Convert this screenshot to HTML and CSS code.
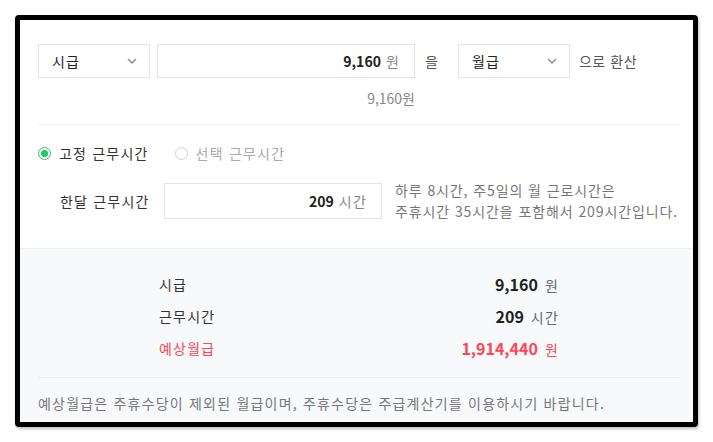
FILE: index.html
```html
<!DOCTYPE html>
<html lang="ko">
<head>
<meta charset="utf-8">
<title>월급 환산</title>
<link rel="stylesheet" href="styles.css">
</head>
<body>
<div class="frame">
  <section class="top">
    <div class="convert-row">
      <div class="select select-from">
        <span>시급</span>
        <svg class="chev" width="10" height="6" viewBox="0 0 10 6"><path d="M1 1 L5 5 L9 1" fill="none" stroke="#888" stroke-width="1.4"/></svg>
      </div>
      <div class="amount">
        <b>9,160</b><span class="unit">원</span>
      </div>
      <span class="particle">을</span>
      <div class="select select-to">
        <span>월급</span>
        <svg class="chev" width="10" height="6" viewBox="0 0 10 6"><path d="M1 1 L5 5 L9 1" fill="none" stroke="#888" stroke-width="1.4"/></svg>
      </div>
      <span class="suffix">으로 환산</span>
    </div>
    <div class="echo-row"><span class="echo">9,160원</span></div>
    <hr class="divider">
    <div class="radio-row">
      <label class="radio checked"><span class="dot"></span>고정 근무시간</label>
      <label class="radio"><span class="dot"></span>선택 근무시간</label>
    </div>
    <div class="hours-row">
      <span class="hours-label">한달 근무시간</span>
      <div class="hours-input"><b>209</b><span class="unit">시간</span></div>
      <p class="hours-help">하루 8시간, 주5일의 월 근로시간은<br>주휴시간 35시간을 포함해서 209시간입니다.</p>
    </div>
  </section>
  <section class="result">
    <ul class="summary">
      <li><span class="k">시급</span><span class="v"><b>9,160</b><span class="unit">원</span></span></li>
      <li><span class="k">근무시간</span><span class="v"><b>209</b><span class="unit">시간</span></span></li>
      <li class="total"><span class="k">예상월급</span><span class="v"><b>1,914,440</b><span class="unit">원</span></span></li>
    </ul>
    <hr class="divider">
    <p class="note">예상월급은 주휴수당이 제외된 월급이며, 주휴수당은 주급계산기를 이용하시기 바랍니다.</p>
  </section>
</div>
</body>
</html>
```

FILE: styles.css
```css
html, body {
  margin: 0;
  padding: 0;
  background: #fff;
}
body {
  font-family: "Noto Sans CJK KR", "Noto Sans", sans-serif;
  font-size: 14px;
  color: #222;
  letter-spacing: 1.2px;
}
b {
  letter-spacing: 0;
}
.frame {
  margin: 15px;
  height: 412px;
  box-sizing: border-box;
  border: 5px solid #000;
  border-radius: 4px;
  box-shadow: 1px 2px 3px rgba(0,0,0,0.25);
  display: flex;
  flex-direction: column;
  overflow: hidden;
  background: #fff;
}
.top {
  padding: 24px 13px 0 18px;
  height: 228px;
  box-sizing: border-box;
}
.convert-row {
  display: flex;
  align-items: center;
  height: 34px;
}
.select {
  box-sizing: border-box;
  width: 112px;
  height: 34px;
  border: 1px solid #e1e5ea;
  display: flex;
  align-items: center;
  justify-content: space-between;
  padding: 0 12px 0 13px;
  line-height: 20px;
}
.amount {
  box-sizing: border-box;
  width: 258px;
  height: 34px;
  margin-left: 7px;
  border: 1px solid #e1e5ea;
  display: flex;
  align-items: center;
  justify-content: flex-end;
  padding-right: 14px;
}
.amount b, .hours-input b {
  font-weight: 700;
  color: #222;
}
.unit {
  color: #888;
  margin-left: 5px;
}
.particle {
  margin: 0 20px 0 10px;
  color: #555;
  letter-spacing: 0;
}
.suffix {
  margin-left: 9px;
  color: #555;
  letter-spacing: 0.6px;
}
.echo-row {
  display: flex;
  width: 377px;
  justify-content: flex-end;
  margin-top: 10px;
  line-height: 20px;
}
.echo {
  color: #888;
  letter-spacing: 0;
}
.divider {
  border: 0;
  border-top: 1px solid #eceef1;
  margin: 16px 0 0 0;
  height: 0;
}
.radio-row {
  display: flex;
  align-items: center;
  margin-top: 18px;
  line-height: 20px;
  gap: 26px;
}
.radio {
  display: flex;
  align-items: center;
  color: #aaa;
}
.radio.checked {
  color: #333;
}
.dot {
  box-sizing: border-box;
  width: 13px;
  height: 13px;
  border-radius: 50%;
  border: 1px solid #d0d0d0;
  margin-right: 8px;
  background: #fff;
}
.radio.checked .dot {
  border: 1.5px solid #27c96a;
  background: radial-gradient(circle, #27c96a 0 3.4px, #fff 3.8px);
}
.hours-row {
  display: flex;
  align-items: center;
  margin-top: 17px;
}
.hours-label {
  width: 126px;
  padding-left: 22px;
  box-sizing: border-box;
  color: #333;
}
.hours-input {
  box-sizing: border-box;
  width: 218px;
  height: 36px;
  border: 1px solid #e1e5ea;
  display: flex;
  align-items: center;
  justify-content: flex-end;
  padding-right: 14px;
}
.hours-help {
  margin: 0 0 0 13px;
  color: #777;
  line-height: 21px;
  font-size: 14px;
  letter-spacing: 0.9px;
}
.result {
  flex: 1;
  background: #f8f9fb;
  border-top: 1px solid #eef0f2;
  padding: 19px 13px 0 18px;
}
.summary {
  list-style: none;
  margin: 0 auto;
  padding: 0;
  width: 400px;
}
.summary li {
  display: flex;
  justify-content: space-between;
  align-items: center;
  height: 32px;
}
.summary .k {
  color: #333;
}
.summary .v b {
  font-size: 16px;
  font-weight: 700;
  color: #222;
}
.summary .v .unit {
  margin-left: 7px;
  color: #666;
}
.summary li.total .k,
.summary li.total .v b,
.summary li.total .v .unit {
  color: #ff4553;
}
.result .divider {
  margin-top: 13px;
}
.note {
  margin: 15px 0 0 0;
  line-height: 20px;
  color: #777;
}
```
